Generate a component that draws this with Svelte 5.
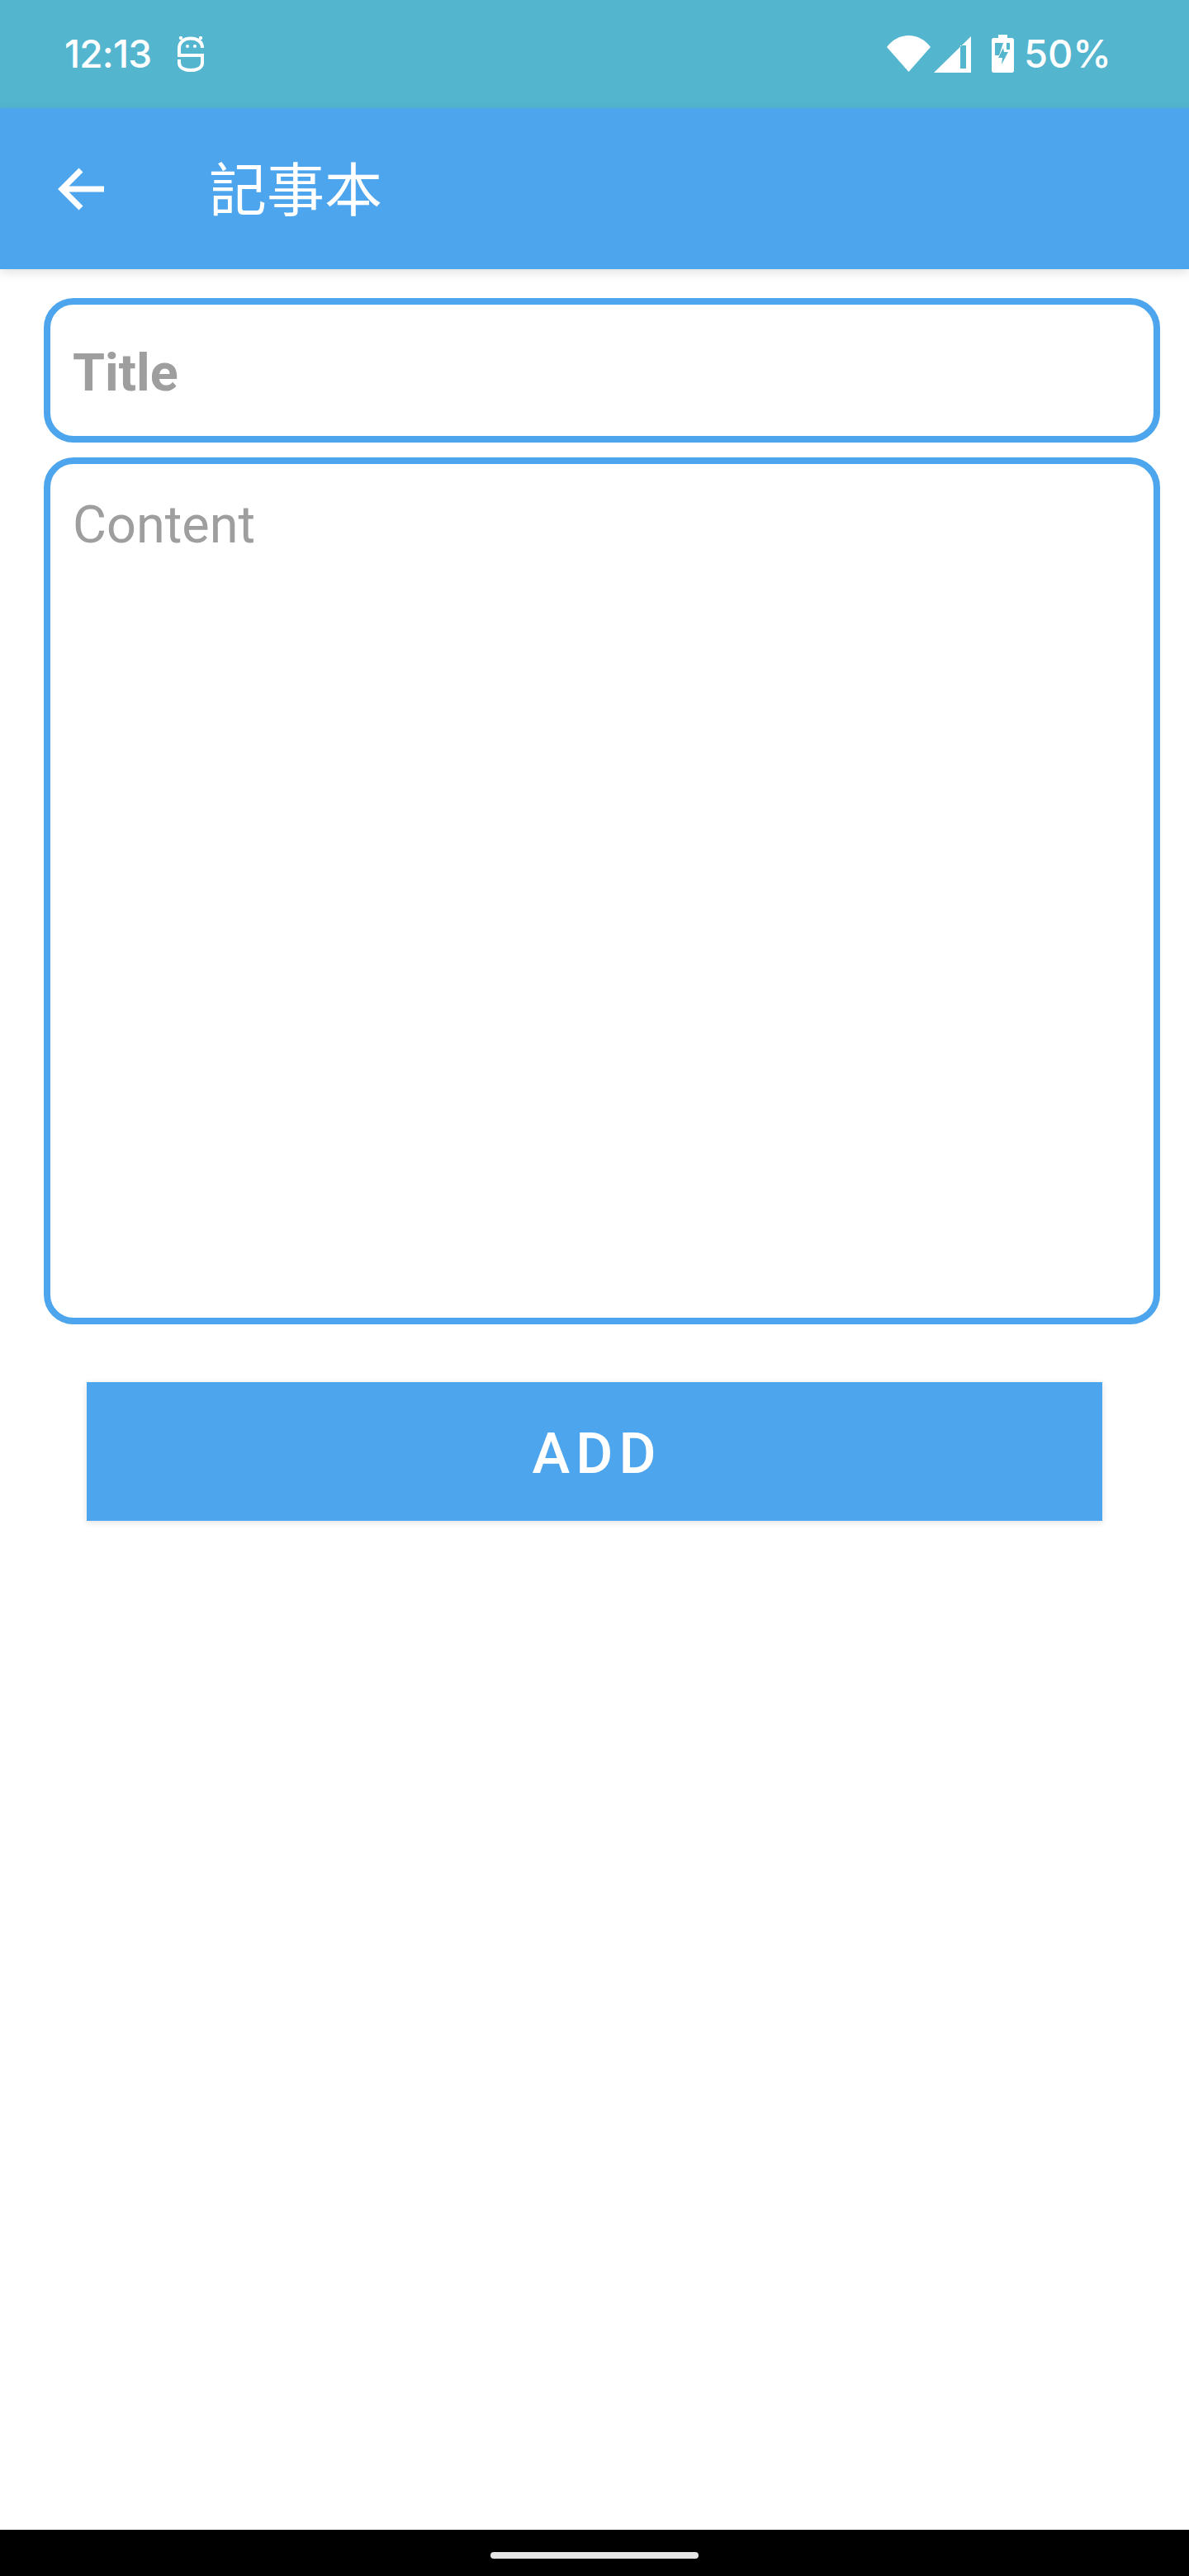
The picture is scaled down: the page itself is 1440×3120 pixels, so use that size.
<script lang="ts">
  const cjk = '記事本';
</script>

<div class="screen">
  <div class="status">
    <div class="status-left">
      <span class="time">12:13</span>
      <svg class="bot" viewBox="0 0 32 43" width="32" height="43">
        <path d="M30 14C30 6 23 2.500 16 2.500S2 6 2 15V23H30V32C30 38 24 41 16 41S2 38 2 32V28" fill="none" stroke="#fff" stroke-width="4"/>
        <circle cx="12" cy="12" r="2" fill="#fff"/>
        <circle cx="21" cy="12" r="2" fill="#fff"/>
        <circle cx="4" cy="2" r="2.200" fill="#fff"/>
        <circle cx="28" cy="2" r="2.200" fill="#fff"/>
      </svg>
    </div>
    <div class="status-right">
      <svg class="wifi" viewBox="0 0 53 44" width="53" height="44">
        <path d="M0 14C7 5 16 0 26.500 0S46 5 53 14L26.500 44z" fill="#fff"/>
      </svg>
      <svg class="signal" viewBox="0 0 45 44" width="45" height="44">
        <path fill-rule="evenodd" d="M45 0v44H0zM32 11 32 39h7V11z" fill="#fff"/>
      </svg>
      <svg class="battery" viewBox="0 0 27 46" width="27" height="46">
        <path fill-rule="evenodd" d="M8 0h11v4h5.500C26 4 27 5 27 6.500V43.500C27 45 26 46 24.500 46h-22C1 46 0 45 0 43.500V6.500C0 5 1 4 2.500 4H8zM4 10v15h5L14 10zM18 10v8h4V10zM14 16 8 28h5l-1 8 8-15h-5z" fill="#fff"/>
      </svg>
      <span class="pct">50%</span>
    </div>
  </div>

  <header class="bar">
    <svg class="back" viewBox="0 0 56 56" width="56" height="56">
      <path d="M56 28H9M28 5 5 28 28 51" fill="none" stroke="#fff" stroke-width="7"/>
    </svg>
    <h1>{cjk}</h1>
  </header>

  <main class="form">
    <div class="field title-field"><span class="hint title-hint">Title</span></div>
    <div class="field content-field"><span class="hint">Content</span></div>
    <button class="add">ADD</button>
  </main>

  <div class="nav"><div class="handle"></div></div>
</div>

<style>
  :global(body) {
    margin: 0;
    background: #fff;
  }

  .screen {
    width: 1440px;
    height: 3120px;
    display: flex;
    flex-direction: column;
    font-family: Roboto, "Liberation Sans", sans-serif;
    overflow: hidden;
  }

  /* status bar */
  .status {
    height: 131px;
    background: #54b5cf;
    display: flex;
    justify-content: space-between;
    align-items: flex-start;
    color: #fff;
    flex-shrink: 0;
  }

  .status-left {
    display: flex;
    align-items: center;
    margin: 42px 0 0 78px;
    gap: 32px;
  }

  .time {
    font-family: Inter, sans-serif;
    font-size: 46px;
    font-weight: 500;
    line-height: 46px;
    letter-spacing: -0.8px;
  }

  .status-right {
    display: flex;
    align-items: flex-end;
    margin: 42px 94px 0 0;
    height: 46px;
  }

  .wifi { margin-bottom: 1px; }
  .signal { margin-left: 4px; }
  .battery { margin-left: 25px; }

  .pct {
    margin-left: 12px;
    font-family: Inter, sans-serif;
    font-size: 47px;
    font-weight: 500;
    line-height: 46px;
  }

  /* app bar */
  .bar {
    height: 195px;
    background: #4ca5ed;
    display: flex;
    align-items: center;
    box-shadow: 0 4px 12px rgba(0, 0, 0, 0.12);
    position: relative;
    flex-shrink: 0;
  }

  .back {
    margin-left: 70px;
  }

  h1 {
    margin: 0 0 6px 127px;
    font-family: "Noto Sans CJK TC", sans-serif;
    font-weight: 400;
    font-size: 70px;
    color: #fff;
  }

  /* form */
  .form {
    flex: 1;
    display: flex;
    flex-direction: column;
    padding: 35px 35px 0 53px;
  }

  .field {
    border: 8px solid #4ca5ed;
    border-radius: 36px;
    box-sizing: border-box;
    padding: 0 27px;
    color: #9e9e9e;
    font-size: 63px;
    display: flex;
  }

  .title-field {
    height: 175px;
    padding-top: 6px;
    align-items: center;
  }

  .content-field {
    height: 1050px;
    margin-top: 18px;
    padding-top: 37px;
    align-items: flex-start;
  }

  .hint {
    line-height: 74px;
  }

  .title-hint {
    font-weight: 700;
  }

  .add {
    width: 1230px;
    height: 168px;
    margin: 70px 0 0 52px;
    padding: 4px 0 0 6px;
    border: 0;
    background: #4ca5ed;
    color: #fff;
    font-family: Roboto, "Liberation Sans", sans-serif;
    font-size: 69px;
    font-weight: 500;
    letter-spacing: 7px;
    box-shadow: 0 2px 8px rgba(0, 0, 0, 0.12);
  }

  /* gesture bar */
  .nav {
    height: 56px;
    background: #000;
    display: flex;
    justify-content: center;
    flex-shrink: 0;
  }

  .handle {
    width: 252px;
    height: 8px;
    margin-top: 27px;
    border-radius: 4px;
    background: #e4e4e4;
  }
</style>
